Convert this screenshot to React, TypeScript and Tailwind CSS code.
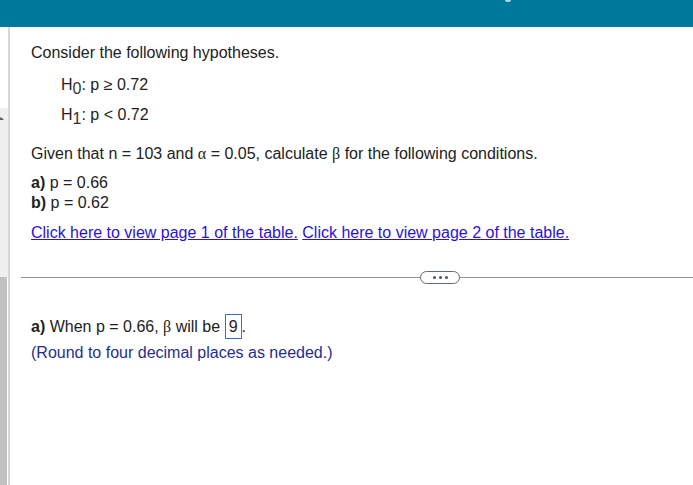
export default function App() {
  return (
    <div className="w-[693px] h-[485px] overflow-hidden bg-white flex flex-col font-['Liberation_Sans',Arial,sans-serif] text-[16px] text-[#222]">
      {/* top bar */}
      <div className="relative h-[27px] shrink-0 bg-[#00789b]">
        <div className="absolute left-[505px] top-0 w-[6px] h-[2px] rounded-b bg-[#a9d3df]"></div>
      </div>

      <div className="flex flex-1 min-h-0">
        {/* left scroll strip */}
        <div className="w-[8px] shrink-0 flex flex-col">
          <div className="h-[81px] bg-white"></div>
          <div className="relative h-[169px] bg-[#f0f0f0]">
            <div className="absolute left-0 top-[9px] w-0 h-0 border-l-[3px] border-l-transparent border-r-[3px] border-r-transparent border-b-[3px] border-b-[#606060] -translate-x-[2px]"></div>
          </div>
          <div className="flex-1 w-[7px] bg-[#c1c1c1]"></div>
        </div>
        <div className="w-[2px] shrink-0 bg-[#d4d7db]"></div>

        {/* content */}
        <div className="flex-1 flex flex-col">
          <div className="pl-[21px] pt-[16px] leading-[20px]">
            <p>Consider the following hypotheses.</p>
            <div className="pl-[30px] mt-[12px]">
              <p>
                H<span className="relative top-[4px] text-[#333]">0</span>: p ≥ 0.72
              </p>
              <p className="mt-[10px]">
                H<span className="relative top-[4px] text-[#333]">1</span>: p &lt; 0.72
              </p>
            </div>
            <p className="mt-[19px]">
              Given that n = 103 and <span className="font-['Liberation_Serif',serif]">α</span> = 0.05, calculate{" "}
              <span className="font-['Liberation_Serif',serif]">β</span> for the following conditions.
            </p>
            <p className="mt-[9px]">
              <b>a)</b> p = 0.66
            </p>
            <p>
              <b>b)</b> p = 0.62
            </p>
            <p className="mt-[10px] text-[#2a12dc]">
              <a href="#" className="underline">Click here to view page 1 of the table.</a>{" "}
              <a href="#" className="underline">Click here to view page 2 of the table.</a>
            </p>
          </div>

          {/* separator */}
          <div className="relative mt-[28px] ml-[11px] h-[12px] flex items-center">
            <div className="h-px w-full bg-[#8b9199]"></div>
            <div className="absolute left-[399px] top-0 w-[40px] h-[13px] rounded-full border border-[#5f6b76] bg-white flex items-center justify-center gap-[3px]">
              <span className="w-[3px] h-[3px] rounded-full bg-[#4a5560]"></span>
              <span className="w-[3px] h-[3px] rounded-full bg-[#4a5560]"></span>
              <span className="w-[3px] h-[3px] rounded-full bg-[#4a5560]"></span>
            </div>
          </div>

          <div className="pl-[21px] mt-[31px] leading-[20px]">
            <p className="flex items-center">
              <b>a)</b>&nbsp;When p = 0.66,&nbsp;<span className="font-['Liberation_Serif',serif]">β</span>&nbsp;will be&nbsp;
              <span className="inline-flex items-center justify-center w-[17px] h-[25px] border border-[#3a6fd0]">9</span>
              <span>.</span>
            </p>
            <p className="mt-[4px] text-[#1f2f8c]">(Round to four decimal places as needed.)</p>
          </div>
        </div>
      </div>
    </div>
  );
}
